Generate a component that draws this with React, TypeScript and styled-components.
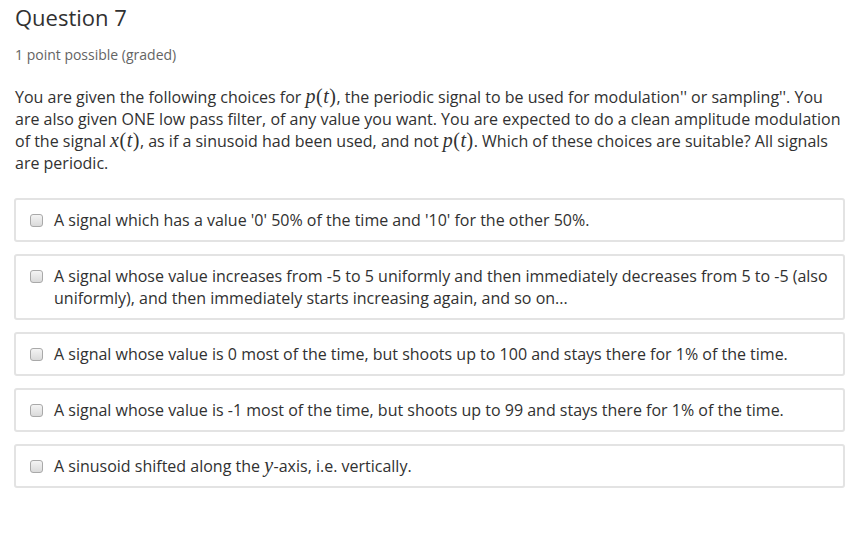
import React from "react";
import styled, { createGlobalStyle } from "styled-components";

const GlobalStyle = createGlobalStyle`
  html, body {
    margin: 0;
    padding: 0;
    background: #ffffff;
  }
  body {
    font-family: "Open Sans", "Liberation Sans", sans-serif;
    color: #313131;
  }
`;

const Page = styled.div`
  padding: 2px 14px 20px 14px;
`;

const Title = styled.h3`
  margin: 0;
  padding-left: 1px;
  font-size: 22px;
  font-weight: 400;
  line-height: 30px;
  color: #313131;
`;

const Points = styled.div`
  margin-top: 13px;
  padding-left: 1px;
  font-size: 14px;
  line-height: 20px;
  color: #646464;
`;

const Prompt = styled.p`
  margin: 21px 0 0 0;
  padding-left: 1px;
  font-size: 16px;
  line-height: 22px;
  color: #313131;
`;

const M = styled.span`
  font-family: "Liberation Serif", "DejaVu Serif", serif;
  font-size: 20px;
  line-height: 1;
  letter-spacing: 0.5px;
`;

const MI = styled.i`
  font-family: "Liberation Serif", "DejaVu Serif", serif;
  font-style: italic;
`;

const Choices = styled.div`
  margin-top: 24px;
  display: flex;
  flex-direction: column;
  gap: 12px;
`;

const Choice = styled.label`
  display: flex;
  align-items: flex-start;
  gap: 11px;
  border: 2px solid #e3e3e3;
  border-radius: 3px;
  padding: 9px 14px 9px 14px;
  font-size: 16px;
  line-height: 22px;
  color: #313131;
`;

const Box = styled.span`
  flex: none;
  width: 11px;
  height: 11px;
  margin-top: 5px;
  border: 1px solid #a9a9a9;
  border-radius: 3px;
  background: linear-gradient(#f4f4f4, #dadada);
`;

const Math = ({ v }: { v: string }) => (
  <M>
    <MI>{v}</MI>(<MI>t</MI>)
  </M>
);

const choices: React.ReactNode[] = [
  "A signal which has a value '0' 50% of the time and '10' for the other 50%.",
  "A signal whose value increases from -5 to 5 uniformly and then immediately decreases from 5 to -5 (also uniformly), and then immediately starts increasing again, and so on...",
  "A signal whose value is 0 most of the time, but shoots up to 100 and stays there for 1% of the time.",
  "A signal whose value is -1 most of the time, but shoots up to 99 and stays there for 1% of the time.",
  <>
    A sinusoid shifted along the{" "}
    <M>
      <MI>y</MI>
    </M>
    -axis, i.e. vertically.
  </>,
];

export default function App() {
  return (
    <Page>
      <GlobalStyle />
      <Title>Question 7</Title>
      <Points>1 point possible (graded)</Points>
      <Prompt>
        You are given the following choices for <Math v="p" />, the periodic
        signal to be used for modulation'' or sampling''. You are also given
        ONE low pass filter, of any value you want. You are expected to do a
        clean amplitude modulation of the signal <Math v="x" />, as if a
        sinusoid had been used, and not <Math v="p" />. Which of these choices
        are suitable? All signals are periodic.
      </Prompt>
      <Choices>
        {choices.map((c, i) => (
          <Choice key={i}>
            <Box />
            <span>{c}</span>
          </Choice>
        ))}
      </Choices>
    </Page>
  );
}
